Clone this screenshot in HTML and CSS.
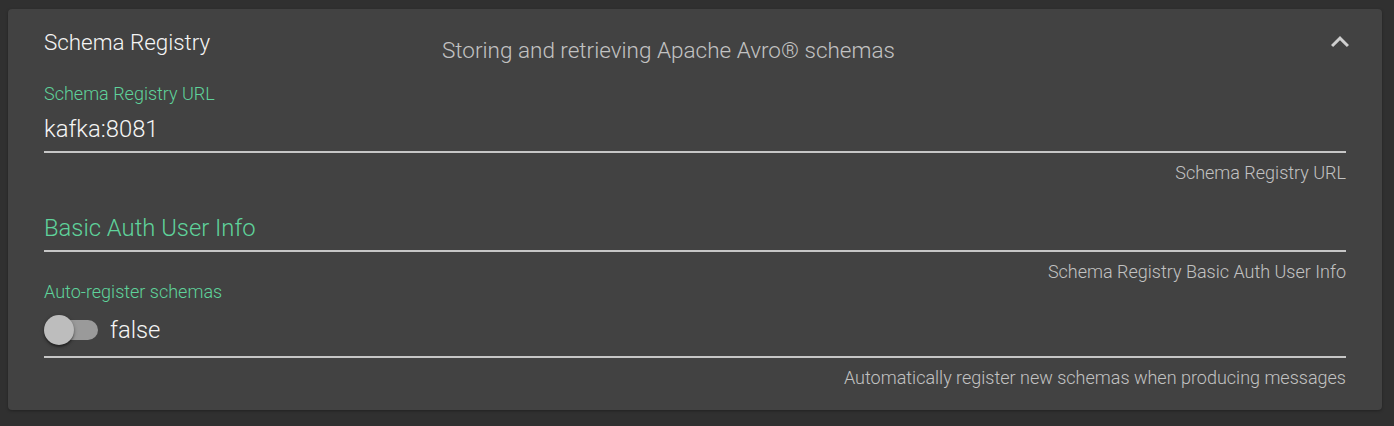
FILE: index.html
```html
<!DOCTYPE html>
<html lang="en">
<head>
    <meta charset="UTF-8">
    <meta name="viewport" content="width=device-width, initial-scale=1.0">
    <title>Schema Registry</title>
    <link rel="stylesheet" href="styles.css">
</head>
<body>
    <section class="panel">
        <div class="summary">
            <h3 class="heading">Schema Registry</h3>
            <p class="secondary">Storing and retrieving Apache Avro® schemas</p>
            <svg class="expand-icon" viewBox="0 0 24 24" width="36" height="36">
                <path d="M12 8l-6 6 1.41 1.41L12 10.83l4.59 4.58L18 14z"></path>
            </svg>
        </div>

        <div class="details">
            <div class="field">
                <label class="field-label">Schema Registry URL</label>
                <div class="field-input">kafka:8081</div>
                <p class="helper">Schema Registry URL</p>
            </div>

            <div class="field">
                <div class="field-input placeholder">Basic Auth User Info</div>
                <p class="helper">Schema Registry Basic Auth User Info</p>
            </div>

            <div class="field">
                <label class="field-label">Auto-register schemas</label>
                <div class="field-input switch-row">
                    <span class="switch">
                        <span class="track"></span>
                        <span class="thumb"></span>
                    </span>
                    <span class="switch-text">false</span>
                </div>
                <p class="helper">Automatically register new schemas when producing messages</p>
            </div>
        </div>
    </section>
</body>
</html>
```

FILE: styles.css
```css
body {
    margin: 0;
    padding: 9px 12px 16px 8px;
    background-color: #303030;
    font-family: Roboto, "Liberation Sans", sans-serif;
    font-weight: 300;
    color: #f2f2f2;
}

.panel {
    width: 1374px;
    background-color: #424242;
    border-radius: 4px;
    box-shadow: 0 1px 3px rgba(0, 0, 0, 0.3);
}

/* Header row */
.summary {
    display: flex;
    align-items: flex-start;
    padding: 20px 24px 0 36px;
}

.heading {
    flex: 0 0 398px;
    margin: 0;
    font-size: 22.4px;
    font-weight: 300;
    line-height: 26px;
    color: #f5f5f5;
}

.secondary {
    margin: 8px 0 0 0;
    font-size: 22.5px;
    line-height: 26px;
    color: #c2c2c2;
}

.expand-icon {
    margin: -5px 0 0 auto;
    fill: #cfcfcf;
}

/* Form fields */
.details {
    padding: 21px 36px 22px 36px;
}

.field-label {
    display: block;
    font-size: 18px;
    line-height: 20px;
    color: #5fd39b;
}

.field-input {
    margin-top: 10px;
    height: 30px;
    padding-bottom: 7px;
    font-size: 23.8px;
    line-height: 30px;
    color: #f5f5f5;
    border-bottom: 2px solid #c6c6c6;
}

.field-input.placeholder {
    margin-top: 30px;
    color: #5fd39b;
}

.helper {
    margin: 10px 0 0 0;
    font-size: 18px;
    line-height: 20px;
    text-align: right;
    color: #c2c2c2;
}

/* Switch */
.switch-row {
    display: flex;
    align-items: center;
    gap: 12px;
    margin-top: 8px;
    height: 40px;
    padding-bottom: 6px;
}

.switch {
    position: relative;
    width: 54px;
    height: 30px;
}

.track {
    position: absolute;
    left: 4px;
    top: 5px;
    width: 50px;
    height: 20px;
    border-radius: 10px;
    background-color: #9a9a9a;
}

.thumb {
    position: absolute;
    left: 0;
    top: 0;
    width: 30px;
    height: 30px;
    border-radius: 50%;
    background-color: #bdbdbd;
    box-shadow: 0 2px 2px rgba(0, 0, 0, 0.35), 0 1px 4px rgba(0, 0, 0, 0.25);
}

.switch-text {
    color: #f5f5f5;
}
```
